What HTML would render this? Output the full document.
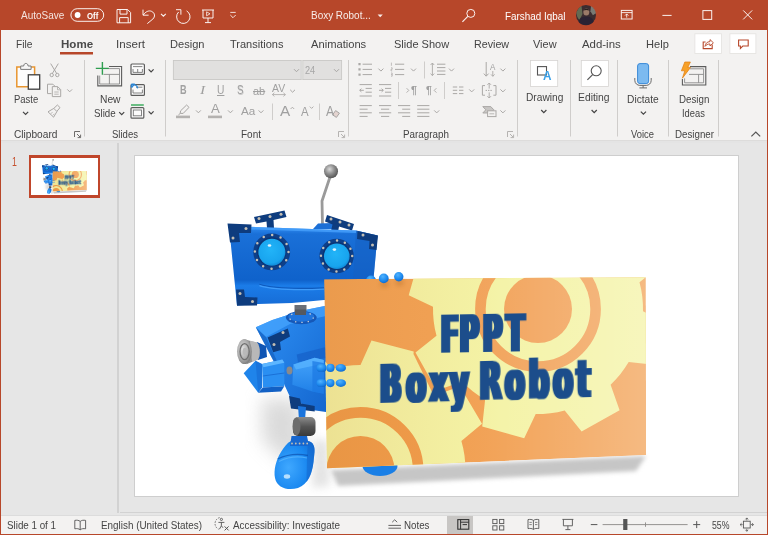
<!DOCTYPE html>
<html lang="en"><head><meta charset="utf-8"><title>Boxy Robot - PowerPoint</title>
<style>
html,body{margin:0;padding:0;}
body{width:768px;height:535px;overflow:hidden;position:relative;background:#e6e6e6;font-family:"Liberation Sans",sans-serif;}
.t{position:absolute;white-space:nowrap;transform-origin:0 50%;line-height:normal;display:inline-block;}
.abs{position:absolute;}
#title{left:0;top:0;width:768px;height:30.2px;background:#b7472a;}
#ribbon{left:0;top:30.2px;width:768px;height:109.8px;background:#f3f2f1;}
#ribline{left:0;top:140px;width:768px;height:1px;background:#dddcdb;}
#wsband{left:0;top:141px;width:768px;height:2px;background:#e4e4e4;}
#status{left:0;top:515px;width:768px;height:20px;background:#f3f2f1;border-top:1px solid #dcdcdc;box-sizing:border-box;}
#bl{left:0;top:0;width:1.2px;height:535px;background:#b7472a;}
#br{left:766.8px;top:0;width:1.2px;height:535px;background:#b7472a;}
#bb{left:0;top:534px;width:768px;height:1px;background:#b7472a;}
#slide{left:134.8px;top:156px;width:603.3px;height:339.6px;background:#fff;box-shadow:0 0 0 .9px #cbcbcb;}
#thumb{left:28.8px;top:154.8px;width:71.5px;height:43px;background:#c0462b;}
#thumbin{left:31.4px;top:157.5px;width:66.3px;height:37.5px;background:#fff;}
#vdiv{left:117.3px;top:143px;width:1.6px;height:370px;background:#d2d2d2;}
#hdiv{left:120px;top:512.2px;width:648px;height:1px;background:#d2d2d2;}
#selview{left:446.5px;top:515.5px;width:26.5px;height:19.5px;background:#c8c6c4;}
svg{position:absolute;left:0;top:0;overflow:visible;}

</style></head>
<body>
<div class="abs" id="title"></div>
<div class="abs" id="ribbon"></div>
<div class="abs" id="ribline"></div>
<div class="abs" id="wsband"></div>
<div class="abs" id="vdiv"></div>
<div class="abs" id="hdiv"></div>
<div class="abs" id="slide"></div>
<div class="abs" id="thumb"></div>
<div class="abs" id="thumbin"></div>
<div class="abs" id="status"></div>
<div class="abs" id="selview"></div>
<svg id="art" width="768" height="535" viewBox="0 0 768 535">
<defs>
<clipPath id="aslideclip"><rect x="134.8" y="156" width="603.3" height="339.6"/></clipPath>
<clipPath id="asignclip"><path d="M324.1 279.3L645.8 277.2L646.1 455.1L327 468.2Z"/></clipPath>
<filter id="abl4" x="-30%" y="-30%" width="160%" height="160%"><feGaussianBlur stdDeviation="4"/></filter>
<filter id="abl8" x="-40%" y="-40%" width="180%" height="180%"><feGaussianBlur stdDeviation="9"/></filter>
<filter id="adil" x="-5%" y="-10%" width="110%" height="120%"><feMorphology operator="dilate" radius="2 0"/></filter>
<filter id="abl2" x="-30%" y="-30%" width="160%" height="160%"><feGaussianBlur stdDeviation="2"/></filter>
<linearGradient id="agHead" x1="0" y1="0" x2="0" y2="1"><stop offset="0" stop-color="#3390f4"/><stop offset=".1" stop-color="#1a70d8"/><stop offset=".68" stop-color="#0f62cb"/><stop offset=".75" stop-color="#1b7ce8"/><stop offset="1" stop-color="#166cd6"/></linearGradient>
<linearGradient id="agBody" x1="0" y1="0" x2="1" y2="1"><stop offset="0" stop-color="#2f92f6"/><stop offset="1" stop-color="#1466cf"/></linearGradient>
<linearGradient id="agArm" x1="0" y1="0" x2="0" y2="1"><stop offset="0" stop-color="#45a4fb"/><stop offset="1" stop-color="#1f7fe6"/></linearGradient>
<radialGradient id="agLens" cx=".45" cy=".4" r=".62"><stop offset="0" stop-color="#22b4f8"/><stop offset=".8" stop-color="#18a4ee"/><stop offset="1" stop-color="#0f86d6"/></radialGradient>
<radialGradient id="agBall" cx=".4" cy=".35" r=".7"><stop offset="0" stop-color="#d9d9d9"/><stop offset=".5" stop-color="#8d8d8d"/><stop offset="1" stop-color="#4e4e4e"/></radialGradient>
<radialGradient id="agFing" cx=".4" cy=".3" r=".8"><stop offset="0" stop-color="#4fb3ff"/><stop offset=".6" stop-color="#1a86ec"/><stop offset="1" stop-color="#0f5fc0"/></radialGradient>
<linearGradient id="agKnee" x1="0" y1="0" x2="0" y2="1"><stop offset="0" stop-color="#8b8b8b"/><stop offset=".5" stop-color="#555"/><stop offset="1" stop-color="#3a3a3a"/></linearGradient>
<radialGradient id="agShoe" cx=".35" cy=".55" r=".8"><stop offset="0" stop-color="#3fa8ff"/><stop offset=".6" stop-color="#1a88f0"/><stop offset="1" stop-color="#1268cf"/></radialGradient>
<linearGradient id="agSignShade" x1="0" y1="0" x2="1" y2="0"><stop offset="0" stop-color="#b86a10" stop-opacity=".13"/><stop offset=".45" stop-color="#d08020" stop-opacity=".02"/><stop offset=".55" stop-color="#fff" stop-opacity=".03"/><stop offset="1" stop-color="#fff" stop-opacity=".26"/></linearGradient>
<radialGradient id="agShoulder" cx=".4" cy=".4" r=".7"><stop offset="0" stop-color="#e2e2e2"/><stop offset=".6" stop-color="#a9a9a9"/><stop offset="1" stop-color="#6e6e6e"/></radialGradient>
</defs>
<g clip-path="url(#aslideclip)">
<!-- shadows -->
<path d="M262 398L300 400L304 450L286 462L262 440Z" fill="#bdbdbd" opacity=".55" filter="url(#abl8)"/>
<path d="M331 470L646 456L636 471L338 486Z" fill="#c6c6c6" filter="url(#abl2)"/>
<path d="M314 440L328 440L330 486L312 488Z" fill="#c4c4c4" opacity=".45" filter="url(#abl4)"/>
<!-- back foot -->
<ellipse cx="380" cy="466" rx="17.500" ry="10" fill="#1a7fe6"/>
<!-- antenna -->
<path d="M330 177L322 201L322.500 226" stroke="#9a9a9a" stroke-width="2.800" fill="none" stroke-linecap="round" stroke-linejoin="round"/>
<circle cx="331" cy="171.300" r="7" fill="url(#agBall)"/>
<!-- antenna base -->
<path d="M313 229L318 223.500L333 223L338 229Z" fill="#1b6fd6"/>
<!-- eyebrows -->
<path d="M254 217L284.500 210.500L286.500 217L273.500 220L274 228L267 228L266.500 221.500L256 223.500Z" fill="#0e3c7e"/>
<path d="M327 215L354 224L352 230.500L339 226.500L338 232L331 231L332.500 224.500L325 221.500Z" fill="#0e3c7e"/>
<g fill="#c4beb2"><circle cx="259" cy="218.600" r="1.500"/><circle cx="270" cy="216.400" r="1.500"/><circle cx="281" cy="214.200" r="1.500"/><circle cx="331" cy="219" r="1.500"/><circle cx="340" cy="222" r="1.500"/><circle cx="349" cy="225" r="1.500"/></g>
<!-- body -->
<path d="M255.800 327.300L272.300 320L300 311L326 305.800L326 412L312 410L290 397L273 360Z" fill="url(#agBody)"/>
<path d="M255.800 327.300L272.300 320L300 311L326 305.800L326 316L290 324L266 337Z" fill="#48a6ff" opacity=".7"/>
<path d="M255.800 327.300L266 337L282 372L273 360Z" fill="#1159b8" opacity=".6"/>
<path d="M296.700 354.400L326 347L326 358L298 362Z" fill="#1560c8" opacity=".7"/>
<path d="M267.600 337.600L287.800 328.600L290 336.500L280 342L281 350L273.200 352.200Z" fill="#0e3c7e"/>
<path d="M289 396L300 398.500L301 403.500L314.700 406L314.700 411.500L291 408.500Z" fill="#0e3c7e"/>
<!-- neck -->
<rect x="294.500" y="305" width="12" height="8" fill="#6a6f78"/>
<ellipse cx="301.300" cy="317.600" rx="15.400" ry="6.600" fill="#1558b8"/>
<ellipse cx="301.300" cy="316.800" rx="13" ry="5" fill="#1f74dc"/>
<ellipse cx="301.300" cy="317.400" rx="12" ry="5" fill="none" stroke="#c4cad4" stroke-width="1.300" stroke-dasharray="1.400 4.800"/>
<rect x="295" y="309.500" width="11" height="5.500" fill="#55595f"/>
<!-- leg -->
<path d="M298 406L306 407L305 420L299 420Z" fill="#1a74dd"/>
<rect x="293" y="417" width="22.500" height="19" rx="5" fill="url(#agKnee)"/>
<ellipse cx="296.500" cy="426.500" rx="4" ry="9" fill="#6c6c6c"/>
<!-- shoe -->
<path d="M291 441L308 441C313 442 315 446 314.500 452L313.500 462C312 474 308 484 298 488C288 491 277 488 275 478C273.500 470 276 460 281 452C284 447 287 443 291 441Z" fill="url(#agShoe)"/>
<path d="M308 441C313 442 315 446 314.500 452L313.500 462C312.500 470 310.500 477 306.500 482L307 456Z" fill="#1466cc" opacity=".55"/>
<path d="M277.700 459C286 455 298 453.500 308 455.500" stroke="#0d55b4" stroke-width="1.300" fill="none" opacity=".75"/>
<path d="M279 461.500C287 457.500 298 456 307 458" stroke="#5cb8ff" stroke-width="1.200" fill="none" opacity=".7"/>
<ellipse cx="287" cy="476.500" rx="3.200" ry="2.200" fill="#d8f0ff" opacity=".8"/>
<path d="M291.500 436L307 436L309 446L290 446Z" fill="#1767cf"/>
<path d="M292 443.500L307.500 443.500" stroke="#c4beb2" stroke-width="1.800" stroke-linecap="round" stroke-dasharray="0 3.800"/>
<!-- head -->
<path d="M229 226L356 230.500L377.500 235.500L371.500 300L324 300L292 303L258 304L237 305.500Z" fill="url(#agHead)"/>
<path d="M356 230.500L377.500 235.500L371.500 300L352 301Z" fill="#1560c2" opacity=".55"/>
<path d="M229 226L356 230.500L356 233L230 228.800Z" fill="#4ba5ff" opacity=".7"/>
<path d="M227.500 223.500L251.500 224.500L251 233L239 233L240 242L230 242.500Z" fill="#0e3c7e"/>
<path d="M357.500 231L378 235.500L376.500 250L369 249L369.500 241L357 239Z" fill="#0e3c7e"/>
<path d="M236 289.500L244 289.500L245 297L257.500 297.500L257 305.500L237 305.800Z" fill="#0e3c7e"/>
<g fill="#c4beb2"><circle cx="233" cy="238" r="1.500"/><circle cx="246" cy="228.500" r="1.500"/><circle cx="363" cy="235" r="1.500"/><circle cx="372.500" cy="245" r="1.500"/><circle cx="240" cy="293.500" r="1.500"/><circle cx="252.500" cy="301.500" r="1.500"/><circle cx="274" cy="344.500" r="1.500"/><circle cx="283" cy="332.500" r="1.500"/></g>
<!-- mouth -->
<path d="M259.400 284.300C270 287.600 290 289.200 324 287.800" stroke="#0d56b8" stroke-width="1.200" fill="none" opacity=".9"/><path d="M259.400 285.600C270 288.900 290 290.500 324 289.100" stroke="#49a4ff" stroke-width="1.200" fill="none" opacity=".8"/>
<!-- eyes -->
<circle cx="271.7" cy="251.9" r="18.4" fill="#0e3f88"/><circle cx="271.7" cy="251.9" r="16.80" fill="none" stroke="#c9c2b4" stroke-width="2.500" stroke-linecap="round" stroke-dasharray="0 8.796"/><circle cx="271.7" cy="251.9" r="14.7" fill="#0b3474"/><circle cx="271.9" cy="252.20000000000002" r="13.5" fill="url(#agLens)"/><ellipse cx="269.5" cy="245.5" rx="1.800" ry="1.300" fill="#fff" opacity=".85"/>
<circle cx="336.6" cy="256" r="17.2" fill="#0e3f88"/><circle cx="336.6" cy="256" r="15.60" fill="none" stroke="#c9c2b4" stroke-width="2.500" stroke-linecap="round" stroke-dasharray="0 8.168"/><circle cx="336.6" cy="256" r="14.0" fill="#0b3474"/><circle cx="336.8" cy="256.3" r="12.8" fill="url(#agLens)"/><ellipse cx="334.40000000000003" cy="249.6" rx="1.800" ry="1.300" fill="#fff" opacity=".85"/>
<!-- shoulder -->
<path d="M257 342L266 346L267 357L258 360Z" fill="#0f55b4"/>
<path d="M243.500 339.300L257 342.500C260.500 346 260.500 356 258 359.500L246.500 364.300Z" fill="#8f8f8f"/>
<path d="M250 340.800L257 342.500C260.500 346 260.500 356 258 359.500L252 362Z" fill="#c9c9c9" opacity=".7"/>
<ellipse cx="244.400" cy="351.600" rx="7.400" ry="12.500" fill="url(#agShoulder)"/>
<ellipse cx="244.600" cy="351.600" rx="4.600" ry="8" fill="none" stroke="#6f6f6f" stroke-width="1.300"/>
<ellipse cx="244.800" cy="351.600" rx="2.200" ry="3.800" fill="#b9b9b9"/>
<!-- arm -->
<path d="M243.700 373.200L255.500 360.800L262 364L262 387.600L258.200 392.800Z" fill="#1f84ea"/>
<path d="M255.500 360.800L262 364L262 387.600L258.200 392.800Z" fill="#1468cf" opacity=".55"/>
<path d="M262 364L282.400 359.500L284.300 362.700L284.300 386.300L262.800 387.600Z" fill="#2a8ff2"/>
<path d="M262 364L282.400 359.500L284.300 362.700L263.400 367.300Z" fill="#5db6ff"/>
<path d="M262.800 376L284.300 373" stroke="#1668cf" stroke-width=".8"/>
<path d="M258.200 392.800L262.800 387.600L284.300 386.300L281 391.500Z" fill="#1260c4"/>
<ellipse cx="289.500" cy="370.500" rx="3" ry="4" fill="#8a8a8a"/>
<path d="M293.400 364.500L314.700 357.800L323.700 360L323.700 393.700L312.400 391.400L292.300 384.700Z" fill="url(#agArm)"/>
<path d="M293.400 364.500L314.700 357.800L323.700 360L323.700 363.500L296 369.500Z" fill="#5ab4ff" opacity=".75"/>
<path d="M312.400 361L323.700 363L323.700 393.700L312.400 391.400Z" fill="#1b78e2" opacity=".7"/>
<circle cx="371" cy="280.600" r="5" fill="url(#agFing)"/>
<!-- sign -->
<g clip-path="url(#asignclip)">
<path d="M324.1 279.3L645.8 277.2L646.1 455.1L327 468.2Z" fill="#f2a256"/>
<path d="M360.5 365.0 L371.5 340.5 L413.7 351.4 L411.4 378.2 L417.7 381.9 L423.7 386.1 L429.4 390.8 L434.7 395.8 L459.9 386.2 L482.0 423.7 L461.4 441.1 L463.2 448.2 L464.5 455.4 L465.2 462.7 L465.5 470.0 L490.0 481.0 L479.1 523.2 L452.3 520.9 L448.6 527.2 L444.4 533.2 L439.7 538.9 L434.7 544.2 L444.3 569.4 L406.8 591.5 L389.4 570.9 L382.3 572.7 L375.1 574.0 L367.8 574.7 L360.5 575.0 L349.5 599.5 L307.3 588.6 L309.6 561.8 L303.3 558.1 L297.3 553.9 L291.6 549.2 L286.3 544.2 L261.1 553.8 L239.0 516.3 L259.6 498.9 L257.8 491.8 L256.5 484.6 L255.8 477.3 L255.5 470.0 L231.0 459.0 L241.9 416.8 L268.7 419.1 L272.4 412.8 L276.6 406.8 L281.3 401.1 L286.3 395.8 L276.7 370.6 L314.2 348.5 L331.6 369.1 L338.7 367.3 L345.9 366.0 L353.2 365.3Z" fill="#f4f3a6"/>
<path d="M643.0 311.3 L667.3 322.8 L655.4 364.8 L628.7 361.9 L624.8 368.1 L620.5 374.0 L615.7 379.6 L610.6 384.8 L619.6 410.2 L581.6 431.5 L564.7 410.5 L557.6 412.2 L550.3 413.3 L543.0 413.9 L535.7 414.0 L524.2 438.3 L482.2 426.4 L485.1 399.7 L478.9 395.8 L473.0 391.5 L467.4 386.7 L462.2 381.6 L436.8 390.6 L415.5 352.6 L436.5 335.7 L434.8 328.6 L433.7 321.3 L433.1 314.0 L433.0 306.7 L408.7 295.2 L420.6 253.2 L447.3 256.1 L451.2 249.9 L455.5 244.0 L460.3 238.4 L465.4 233.2 L456.4 207.8 L494.4 186.5 L511.3 207.5 L518.4 205.8 L525.7 204.7 L533.0 204.1 L540.3 204.0 L551.8 179.7 L593.8 191.6 L590.9 218.3 L597.1 222.2 L603.0 226.5 L608.6 231.3 L613.8 236.4 L639.2 227.4 L660.5 265.4 L639.5 282.3 L641.2 289.4 L642.3 296.7 L642.9 304.0Z" fill="#f4f3a6"/>
<path d="M412 353L409.500 381L434 399L432 392L414 355Z" fill="#f4f3a6"/>
<circle cx="538" cy="309" r="57.600" fill="none" stroke="#f2a45c" stroke-width="10.600"/>
<circle cx="538" cy="309" r="34" fill="#f2a45c"/>
<circle cx="360.500" cy="470" r="57.600" fill="none" stroke="#f09c4c" stroke-width="10.600"/>
<circle cx="360.500" cy="470" r="34" fill="#f09c4c"/>
<path d="M324.1 279.3L645.8 277.2L646.1 455.1L327 468.2Z" fill="url(#agSignShade)"/>
</g>
<g font-family="'DejaVu Sans', 'Liberation Sans', sans-serif" font-weight="700" fill="#1b4e8b" ><g transform="matrix(1 -0.017 0 1 0 8.211)"><g filter="url(#adil)"><text transform="scale(0.53 1)" x="831.70 866.98 910.75 954.91" y="352.2" font-size="50.8" xml:space="preserve">FPPT</text></g></g><g transform="matrix(1 -0.028 0 1 0 13.580)"><g filter="url(#adil)"><text transform="scale(0.546 1)" x="695.26 743.66 786.32 823.90 860.81 877.67 924.62 967.86 1012.71 1055.90" y="400.3" font-size="53.5" xml:space="preserve">Boxy Robot</text></g></g></g>
<!-- fingers on sign -->
<g fill="#b9742e" opacity=".45" filter="url(#abl2)"><ellipse cx="384.500" cy="284" rx="4.500" ry="3.500"/><ellipse cx="399.500" cy="282.500" rx="4.500" ry="3.500"/></g>
<g fill="url(#agFing)">
<circle cx="383.750" cy="278.400" r="4.900"/><circle cx="398.750" cy="276.800" r="4.700"/>
<rect x="316.500" y="364" width="10" height="7.800" rx="3.900"/><circle cx="330.400" cy="367.900" r="4.100"/><ellipse cx="340.800" cy="367.900" rx="5.200" ry="3.900"/>
<rect x="316.500" y="379.200" width="10" height="7.800" rx="3.900"/><circle cx="330.400" cy="383.100" r="4.100"/><ellipse cx="340.800" cy="383.100" rx="5.200" ry="3.900"/>
</g>
</g>
</g>
</svg>
<svg id="{P}thumbart" style="left:31.9px;top:158.2px" width="64.8" height="36.5" viewBox="134.5 155 604 341" preserveAspectRatio="none">
<defs>
<clipPath id="bslideclip"><rect x="134.8" y="156" width="603.3" height="339.6"/></clipPath>
<clipPath id="bsignclip"><path d="M324.1 279.3L645.8 277.2L646.1 455.1L327 468.2Z"/></clipPath>
<filter id="bbl4" x="-30%" y="-30%" width="160%" height="160%"><feGaussianBlur stdDeviation="4"/></filter>
<filter id="bbl8" x="-40%" y="-40%" width="180%" height="180%"><feGaussianBlur stdDeviation="9"/></filter>
<filter id="bdil" x="-5%" y="-10%" width="110%" height="120%"><feMorphology operator="dilate" radius="2 0"/></filter>
<filter id="bbl2" x="-30%" y="-30%" width="160%" height="160%"><feGaussianBlur stdDeviation="2"/></filter>
<linearGradient id="bgHead" x1="0" y1="0" x2="0" y2="1"><stop offset="0" stop-color="#3390f4"/><stop offset=".1" stop-color="#1a70d8"/><stop offset=".68" stop-color="#0f62cb"/><stop offset=".75" stop-color="#1b7ce8"/><stop offset="1" stop-color="#166cd6"/></linearGradient>
<linearGradient id="bgBody" x1="0" y1="0" x2="1" y2="1"><stop offset="0" stop-color="#2f92f6"/><stop offset="1" stop-color="#1466cf"/></linearGradient>
<linearGradient id="bgArm" x1="0" y1="0" x2="0" y2="1"><stop offset="0" stop-color="#45a4fb"/><stop offset="1" stop-color="#1f7fe6"/></linearGradient>
<radialGradient id="bgLens" cx=".45" cy=".4" r=".62"><stop offset="0" stop-color="#22b4f8"/><stop offset=".8" stop-color="#18a4ee"/><stop offset="1" stop-color="#0f86d6"/></radialGradient>
<radialGradient id="bgBall" cx=".4" cy=".35" r=".7"><stop offset="0" stop-color="#d9d9d9"/><stop offset=".5" stop-color="#8d8d8d"/><stop offset="1" stop-color="#4e4e4e"/></radialGradient>
<radialGradient id="bgFing" cx=".4" cy=".3" r=".8"><stop offset="0" stop-color="#4fb3ff"/><stop offset=".6" stop-color="#1a86ec"/><stop offset="1" stop-color="#0f5fc0"/></radialGradient>
<linearGradient id="bgKnee" x1="0" y1="0" x2="0" y2="1"><stop offset="0" stop-color="#8b8b8b"/><stop offset=".5" stop-color="#555"/><stop offset="1" stop-color="#3a3a3a"/></linearGradient>
<radialGradient id="bgShoe" cx=".35" cy=".55" r=".8"><stop offset="0" stop-color="#3fa8ff"/><stop offset=".6" stop-color="#1a88f0"/><stop offset="1" stop-color="#1268cf"/></radialGradient>
<linearGradient id="bgSignShade" x1="0" y1="0" x2="1" y2="0"><stop offset="0" stop-color="#b86a10" stop-opacity=".13"/><stop offset=".45" stop-color="#d08020" stop-opacity=".02"/><stop offset=".55" stop-color="#fff" stop-opacity=".03"/><stop offset="1" stop-color="#fff" stop-opacity=".26"/></linearGradient>
<radialGradient id="bgShoulder" cx=".4" cy=".4" r=".7"><stop offset="0" stop-color="#e2e2e2"/><stop offset=".6" stop-color="#a9a9a9"/><stop offset="1" stop-color="#6e6e6e"/></radialGradient>
</defs>
<g clip-path="url(#bslideclip)">
<!-- shadows -->
<path d="M262 398L300 400L304 450L286 462L262 440Z" fill="#bdbdbd" opacity=".55" filter="url(#bbl8)"/>
<path d="M331 470L646 456L636 471L338 486Z" fill="#c6c6c6" filter="url(#bbl2)"/>
<path d="M314 440L328 440L330 486L312 488Z" fill="#c4c4c4" opacity=".45" filter="url(#bbl4)"/>
<!-- back foot -->
<ellipse cx="380" cy="466" rx="17.500" ry="10" fill="#1a7fe6"/>
<!-- antenna -->
<path d="M330 177L322 201L322.500 226" stroke="#9a9a9a" stroke-width="2.800" fill="none" stroke-linecap="round" stroke-linejoin="round"/>
<circle cx="331" cy="171.300" r="7" fill="url(#bgBall)"/>
<!-- antenna base -->
<path d="M313 229L318 223.500L333 223L338 229Z" fill="#1b6fd6"/>
<!-- eyebrows -->
<path d="M254 217L284.500 210.500L286.500 217L273.500 220L274 228L267 228L266.500 221.500L256 223.500Z" fill="#0e3c7e"/>
<path d="M327 215L354 224L352 230.500L339 226.500L338 232L331 231L332.500 224.500L325 221.500Z" fill="#0e3c7e"/>
<g fill="#c4beb2"><circle cx="259" cy="218.600" r="1.500"/><circle cx="270" cy="216.400" r="1.500"/><circle cx="281" cy="214.200" r="1.500"/><circle cx="331" cy="219" r="1.500"/><circle cx="340" cy="222" r="1.500"/><circle cx="349" cy="225" r="1.500"/></g>
<!-- body -->
<path d="M255.800 327.300L272.300 320L300 311L326 305.800L326 412L312 410L290 397L273 360Z" fill="url(#bgBody)"/>
<path d="M255.800 327.300L272.300 320L300 311L326 305.800L326 316L290 324L266 337Z" fill="#48a6ff" opacity=".7"/>
<path d="M255.800 327.300L266 337L282 372L273 360Z" fill="#1159b8" opacity=".6"/>
<path d="M296.700 354.400L326 347L326 358L298 362Z" fill="#1560c8" opacity=".7"/>
<path d="M267.600 337.600L287.800 328.600L290 336.500L280 342L281 350L273.200 352.200Z" fill="#0e3c7e"/>
<path d="M289 396L300 398.500L301 403.500L314.700 406L314.700 411.500L291 408.500Z" fill="#0e3c7e"/>
<!-- neck -->
<rect x="294.500" y="305" width="12" height="8" fill="#6a6f78"/>
<ellipse cx="301.300" cy="317.600" rx="15.400" ry="6.600" fill="#1558b8"/>
<ellipse cx="301.300" cy="316.800" rx="13" ry="5" fill="#1f74dc"/>
<ellipse cx="301.300" cy="317.400" rx="12" ry="5" fill="none" stroke="#c4cad4" stroke-width="1.300" stroke-dasharray="1.400 4.800"/>
<rect x="295" y="309.500" width="11" height="5.500" fill="#55595f"/>
<!-- leg -->
<path d="M298 406L306 407L305 420L299 420Z" fill="#1a74dd"/>
<rect x="293" y="417" width="22.500" height="19" rx="5" fill="url(#bgKnee)"/>
<ellipse cx="296.500" cy="426.500" rx="4" ry="9" fill="#6c6c6c"/>
<!-- shoe -->
<path d="M291 441L308 441C313 442 315 446 314.500 452L313.500 462C312 474 308 484 298 488C288 491 277 488 275 478C273.500 470 276 460 281 452C284 447 287 443 291 441Z" fill="url(#bgShoe)"/>
<path d="M308 441C313 442 315 446 314.500 452L313.500 462C312.500 470 310.500 477 306.500 482L307 456Z" fill="#1466cc" opacity=".55"/>
<path d="M277.700 459C286 455 298 453.500 308 455.500" stroke="#0d55b4" stroke-width="1.300" fill="none" opacity=".75"/>
<path d="M279 461.500C287 457.500 298 456 307 458" stroke="#5cb8ff" stroke-width="1.200" fill="none" opacity=".7"/>
<ellipse cx="287" cy="476.500" rx="3.200" ry="2.200" fill="#d8f0ff" opacity=".8"/>
<path d="M291.500 436L307 436L309 446L290 446Z" fill="#1767cf"/>
<path d="M292 443.500L307.500 443.500" stroke="#c4beb2" stroke-width="1.800" stroke-linecap="round" stroke-dasharray="0 3.800"/>
<!-- head -->
<path d="M229 226L356 230.500L377.500 235.500L371.500 300L324 300L292 303L258 304L237 305.500Z" fill="url(#bgHead)"/>
<path d="M356 230.500L377.500 235.500L371.500 300L352 301Z" fill="#1560c2" opacity=".55"/>
<path d="M229 226L356 230.500L356 233L230 228.800Z" fill="#4ba5ff" opacity=".7"/>
<path d="M227.500 223.500L251.500 224.500L251 233L239 233L240 242L230 242.500Z" fill="#0e3c7e"/>
<path d="M357.500 231L378 235.500L376.500 250L369 249L369.500 241L357 239Z" fill="#0e3c7e"/>
<path d="M236 289.500L244 289.500L245 297L257.500 297.500L257 305.500L237 305.800Z" fill="#0e3c7e"/>
<g fill="#c4beb2"><circle cx="233" cy="238" r="1.500"/><circle cx="246" cy="228.500" r="1.500"/><circle cx="363" cy="235" r="1.500"/><circle cx="372.500" cy="245" r="1.500"/><circle cx="240" cy="293.500" r="1.500"/><circle cx="252.500" cy="301.500" r="1.500"/><circle cx="274" cy="344.500" r="1.500"/><circle cx="283" cy="332.500" r="1.500"/></g>
<!-- mouth -->
<path d="M259.400 284.300C270 287.600 290 289.200 324 287.800" stroke="#0d56b8" stroke-width="1.200" fill="none" opacity=".9"/><path d="M259.400 285.600C270 288.900 290 290.500 324 289.100" stroke="#49a4ff" stroke-width="1.200" fill="none" opacity=".8"/>
<!-- eyes -->
<circle cx="271.7" cy="251.9" r="18.4" fill="#0e3f88"/><circle cx="271.7" cy="251.9" r="16.80" fill="none" stroke="#c9c2b4" stroke-width="2.500" stroke-linecap="round" stroke-dasharray="0 8.796"/><circle cx="271.7" cy="251.9" r="14.7" fill="#0b3474"/><circle cx="271.9" cy="252.20000000000002" r="13.5" fill="url(#bgLens)"/><ellipse cx="269.5" cy="245.5" rx="1.800" ry="1.300" fill="#fff" opacity=".85"/>
<circle cx="336.6" cy="256" r="17.2" fill="#0e3f88"/><circle cx="336.6" cy="256" r="15.60" fill="none" stroke="#c9c2b4" stroke-width="2.500" stroke-linecap="round" stroke-dasharray="0 8.168"/><circle cx="336.6" cy="256" r="14.0" fill="#0b3474"/><circle cx="336.8" cy="256.3" r="12.8" fill="url(#bgLens)"/><ellipse cx="334.40000000000003" cy="249.6" rx="1.800" ry="1.300" fill="#fff" opacity=".85"/>
<!-- shoulder -->
<path d="M257 342L266 346L267 357L258 360Z" fill="#0f55b4"/>
<path d="M243.500 339.300L257 342.500C260.500 346 260.500 356 258 359.500L246.500 364.300Z" fill="#8f8f8f"/>
<path d="M250 340.800L257 342.500C260.500 346 260.500 356 258 359.500L252 362Z" fill="#c9c9c9" opacity=".7"/>
<ellipse cx="244.400" cy="351.600" rx="7.400" ry="12.500" fill="url(#bgShoulder)"/>
<ellipse cx="244.600" cy="351.600" rx="4.600" ry="8" fill="none" stroke="#6f6f6f" stroke-width="1.300"/>
<ellipse cx="244.800" cy="351.600" rx="2.200" ry="3.800" fill="#b9b9b9"/>
<!-- arm -->
<path d="M243.700 373.200L255.500 360.800L262 364L262 387.600L258.200 392.800Z" fill="#1f84ea"/>
<path d="M255.500 360.800L262 364L262 387.600L258.200 392.800Z" fill="#1468cf" opacity=".55"/>
<path d="M262 364L282.400 359.500L284.300 362.700L284.300 386.300L262.800 387.600Z" fill="#2a8ff2"/>
<path d="M262 364L282.400 359.500L284.300 362.700L263.400 367.300Z" fill="#5db6ff"/>
<path d="M262.800 376L284.300 373" stroke="#1668cf" stroke-width=".8"/>
<path d="M258.200 392.800L262.800 387.600L284.300 386.300L281 391.500Z" fill="#1260c4"/>
<ellipse cx="289.500" cy="370.500" rx="3" ry="4" fill="#8a8a8a"/>
<path d="M293.400 364.500L314.700 357.800L323.700 360L323.700 393.700L312.400 391.400L292.300 384.700Z" fill="url(#bgArm)"/>
<path d="M293.400 364.500L314.700 357.800L323.700 360L323.700 363.500L296 369.500Z" fill="#5ab4ff" opacity=".75"/>
<path d="M312.400 361L323.700 363L323.700 393.700L312.400 391.400Z" fill="#1b78e2" opacity=".7"/>
<circle cx="371" cy="280.600" r="5" fill="url(#bgFing)"/>
<!-- sign -->
<g clip-path="url(#bsignclip)">
<path d="M324.1 279.3L645.8 277.2L646.1 455.1L327 468.2Z" fill="#f2a256"/>
<path d="M360.5 365.0 L371.5 340.5 L413.7 351.4 L411.4 378.2 L417.7 381.9 L423.7 386.1 L429.4 390.8 L434.7 395.8 L459.9 386.2 L482.0 423.7 L461.4 441.1 L463.2 448.2 L464.5 455.4 L465.2 462.7 L465.5 470.0 L490.0 481.0 L479.1 523.2 L452.3 520.9 L448.6 527.2 L444.4 533.2 L439.7 538.9 L434.7 544.2 L444.3 569.4 L406.8 591.5 L389.4 570.9 L382.3 572.7 L375.1 574.0 L367.8 574.7 L360.5 575.0 L349.5 599.5 L307.3 588.6 L309.6 561.8 L303.3 558.1 L297.3 553.9 L291.6 549.2 L286.3 544.2 L261.1 553.8 L239.0 516.3 L259.6 498.9 L257.8 491.8 L256.5 484.6 L255.8 477.3 L255.5 470.0 L231.0 459.0 L241.9 416.8 L268.7 419.1 L272.4 412.8 L276.6 406.8 L281.3 401.1 L286.3 395.8 L276.7 370.6 L314.2 348.5 L331.6 369.1 L338.7 367.3 L345.9 366.0 L353.2 365.3Z" fill="#f4f3a6"/>
<path d="M643.0 311.3 L667.3 322.8 L655.4 364.8 L628.7 361.9 L624.8 368.1 L620.5 374.0 L615.7 379.6 L610.6 384.8 L619.6 410.2 L581.6 431.5 L564.7 410.5 L557.6 412.2 L550.3 413.3 L543.0 413.9 L535.7 414.0 L524.2 438.3 L482.2 426.4 L485.1 399.7 L478.9 395.8 L473.0 391.5 L467.4 386.7 L462.2 381.6 L436.8 390.6 L415.5 352.6 L436.5 335.7 L434.8 328.6 L433.7 321.3 L433.1 314.0 L433.0 306.7 L408.7 295.2 L420.6 253.2 L447.3 256.1 L451.2 249.9 L455.5 244.0 L460.3 238.4 L465.4 233.2 L456.4 207.8 L494.4 186.5 L511.3 207.5 L518.4 205.8 L525.7 204.7 L533.0 204.1 L540.3 204.0 L551.8 179.7 L593.8 191.6 L590.9 218.3 L597.1 222.2 L603.0 226.5 L608.6 231.3 L613.8 236.4 L639.2 227.4 L660.5 265.4 L639.5 282.3 L641.2 289.4 L642.3 296.7 L642.9 304.0Z" fill="#f4f3a6"/>
<path d="M412 353L409.500 381L434 399L432 392L414 355Z" fill="#f4f3a6"/>
<circle cx="538" cy="309" r="57.600" fill="none" stroke="#f2a45c" stroke-width="10.600"/>
<circle cx="538" cy="309" r="34" fill="#f2a45c"/>
<circle cx="360.500" cy="470" r="57.600" fill="none" stroke="#f09c4c" stroke-width="10.600"/>
<circle cx="360.500" cy="470" r="34" fill="#f09c4c"/>
<path d="M324.1 279.3L645.8 277.2L646.1 455.1L327 468.2Z" fill="url(#bgSignShade)"/>
</g>
<g font-family="'DejaVu Sans', 'Liberation Sans', sans-serif" font-weight="700" fill="#1b4e8b" stroke="#1b4e8b" stroke-width="5"><g transform="matrix(1 -0.017 0 1 0 8.211)"><g filter="url(#bdil)"><text transform="scale(0.53 1)" x="831.70 866.98 910.75 954.91" y="352.2" font-size="50.8" xml:space="preserve">FPPT</text></g></g><g transform="matrix(1 -0.028 0 1 0 13.580)"><g filter="url(#bdil)"><text transform="scale(0.546 1)" x="695.26 743.66 786.32 823.90 860.81 877.67 924.62 967.86 1012.71 1055.90" y="400.3" font-size="53.5" xml:space="preserve">Boxy Robot</text></g></g></g>
<!-- fingers on sign -->
<g fill="#b9742e" opacity=".45" filter="url(#bbl2)"><ellipse cx="384.500" cy="284" rx="4.500" ry="3.500"/><ellipse cx="399.500" cy="282.500" rx="4.500" ry="3.500"/></g>
<g fill="url(#bgFing)">
<circle cx="383.750" cy="278.400" r="4.900"/><circle cx="398.750" cy="276.800" r="4.700"/>
<rect x="316.500" y="364" width="10" height="7.800" rx="3.900"/><circle cx="330.400" cy="367.900" r="4.100"/><ellipse cx="340.800" cy="367.900" rx="5.200" ry="3.900"/>
<rect x="316.500" y="379.200" width="10" height="7.800" rx="3.900"/><circle cx="330.400" cy="383.100" r="4.100"/><ellipse cx="340.800" cy="383.100" rx="5.200" ry="3.900"/>
</g>
</g>
</g>
</svg>
<svg width="768" height="535" viewBox="0 0 768 535" fill="none">
<!-- ===== title bar ===== -->
<g stroke="#fff" stroke-width="1" stroke-opacity=".92">
<rect x="70.9" y="8.7" width="32.8" height="12.6" rx="6.3"/>
<circle cx="77.6" cy="15" r="2.9" fill="#fff" stroke="none"/>
<!-- save -->
<path d="M117 9.5h10.6l3 3v10.3h-13.6z"/><path d="M120 9.5v4.6h7v-4.6"/><path d="M119.6 22.8v-5.2h8.6v5.2"/>
<!-- undo -->
<path d="M143 9.6v5.6h5.6"/><path d="M143.3 15c2.2-3.4 5.6-4.9 8.4-3.6 3.4 1.7 3.6 5.2 1.2 7.6l-5.6 4.6" />
<path d="M161 13.8l2.4 2.4 2.4-2.4" stroke-width="1.1"/>
<!-- redo -->
<path d="M186.600 10.900A6.700 6.700 0 1 1 178.600 12"/><path d="M176 9.700h4.900v5"/>
<!-- present -->
<path d="M202 10h12M203 10v8h10v-8M208 18v4.5M205 22.6h6"/><path d="M206.6 11.8l3.4 2-3.4 2z" stroke-width=".8"/>
<!-- customize -->
<path d="M230.3 12.4h5.4M230.3 15l2.7 2.7 2.7-2.7" stroke-width=".9"/>
<!-- search -->
<circle cx="470.8" cy="13.4" r="4"/><path d="M467.8 16.4l-5.4 5.4" stroke-width="1.2"/>
<!-- ribbon display -->
<rect x="621.3" y="10.4" width="10.8" height="8.6"/><path d="M621.3 12.6h10.8M626.7 17.6v-3.6M625 15.6l1.7-1.7 1.7 1.7" stroke-width=".9"/>
<!-- window ctl -->
<path d="M662.4 15.4h9.2"/><rect x="702.9" y="10.6" width="8.8" height="8.8"/><path d="M743.2 10.4l9 9M752.2 10.4l-9 9"/>
</g>
<path d="M377.6 14.4h5.2l-2.6 2.9z" fill="#fff" fill-opacity=".9"/>
<!-- avatar -->
<g>
<circle cx="586" cy="15" r="10" fill="#3b2c30"/>
<path d="M576.5 12a10 10 0 0 1 5-6l1 8-3 6a10 10 0 0 1-3-8z" fill="#6e7a5c" opacity=".8"/>
<path d="M591 6.3a10 10 0 0 1 4.9 7l-3 2-2.5-4z" fill="#8a8f86" opacity=".8"/>
<ellipse cx="586.3" cy="12" rx="3" ry="3.6" fill="#9a7a68"/>
<path d="M583.3 10.6c.4-2.6 5.6-2.6 6 0-1.6-.9-4.4-.9-6 0z" fill="#2a2020"/>
<path d="M578.6 22c.6-4 3.6-5.6 7.6-5.6s6.8 1.6 7.4 5.4a10 10 0 0 1-15 .2z" fill="#2a2233"/>
</g>
<!-- ===== tab row ===== -->
<rect x="60" y="52" width="33" height="2.5" fill="#b7472a"/>
<rect x="694.9" y="33.8" width="26.6" height="19.6" fill="#fff" stroke="#e3e1df" stroke-width=".8"/>
<rect x="729.9" y="33.8" width="26" height="19.6" fill="#fff" stroke="#e3e1df" stroke-width=".8"/>
<g stroke="#b7472a" stroke-width="1.1">
<path d="M705.6 42h-2.4v6.6h9v-4"/><path d="M705 46.4c.4-3 2-4.6 5-4.8v-2l3.4 3.2-3.4 3.2v-2c-2.4 0-3.8.8-5 2.400z" stroke-width=".9"/>
<path d="M738.6 40h9.600v6h-5.400l-2.400 2.400v-2.400h-1.800z"/>
</g>
<!-- ===== ribbon dividers ===== -->
<g stroke="#cfcdcb" stroke-width="1">
<path d="M84.5 60v76.500M165.500 60v76.500M348.500 60v76.500M517.500 60v76.500M570.500 60v76.500M617.500 60v76.500M668.500 60v76.500M718.500 60v76.500"/>
<path d="M272.500 103.500v16.500M319.500 103.500v16.500M424.500 61.500v17M398.500 82v17M444.500 82v17"/>
</g>
<!-- launchers -->
<g stroke="#6e6c6a" stroke-width="1">
<path d="M74.500 137v-5.500h5.500M77 134l3.400 3.400M80.600 134.600v3h-3"/>
<path d="M74.500 137v-5.500h5.500M77 134l3.400 3.400M80.600 134.600v3h-3" transform="translate(264 0)" stroke="#b5b3b1"/>
<path d="M74.500 137v-5.500h5.500M77 134l3.400 3.400M80.600 134.600v3h-3" transform="translate(433 0)" stroke="#b5b3b1"/>
</g>
<path d="M751.400 136.400l4.400-4.400 4.400 4.400" stroke="#555" stroke-width="1.200"/>
<!-- ===== clipboard group ===== -->
<path d="M16.800 67h17.800v19.800h-17.800z" fill="#fdfdfd" stroke="#e8952f" stroke-width="1.500"/>
<path d="M20.700 69.400v-3.400h3c0-3.400 4.400-3.400 4.400 0h3v3.400z" fill="#f6f6f6" stroke="#7a7a7a" stroke-width="1"/>
<rect x="28.300" y="74.800" width="11.400" height="14.400" fill="#fff" stroke="#3f3f3f" stroke-width="1.300"/>
<path d="M23 111.800l2.600 2.600 2.600-2.600" stroke="#444" stroke-width="1.200"/>
<g stroke="#aaa8a6" stroke-width="1">
<!-- scissors -->
<path d="M50.700 63.600l5.900 9.800M58.300 63.600l-5.900 9.800"/><circle cx="51.700" cy="75" r="1.700"/><circle cx="57.300" cy="75" r="1.700"/>
<!-- copy -->
<path d="M51.500 93.600h-4v-9.400h5.400l2 2"/><path d="M52.300 86.600h5.400l3 3v7h-8.400z"/><path d="M57.500 86.800v3h3M54.300 92h4.400M54.300 94.200h4.400" stroke-width=".8"/>
<path d="M67.300 89.400l2.400 2.400 2.400-2.400"/>
<!-- format painter -->
<path d="M57.400 105l2.600 2.600-3.200 3.800-3-3z"/><path d="M53.800 108.400l-5.800 3.400 5.600 5.400 3.400-5.800"/><path d="M50.600 113.600l2 -1.200M52.800 115.400l1.400-1.600" stroke-width=".7"/>
</g>
<!-- ===== slides group ===== -->
<g stroke="#5c5c5c" stroke-width="1.100">
<path d="M109 66.500h12.600v19.400h-23.800v-10.500"/><path d="M103.500 68.600h16v15.400h-19.800v-8.400" stroke-width=".9" stroke="#8a8a8a"/>
<path d="M103.500 74.400h16M109.400 74.400v9.600" stroke-width=".9" stroke="#8a8a8a"/>
</g>
<path d="M102.400 62v12.800M95.800 68.400h13" stroke="#2f9e50" stroke-width="1.400"/>
<path d="M119.200 112.200l2.500 2.500 2.500-2.500" stroke="#444" stroke-width="1.200"/>
<!-- layout -->
<g stroke="#5c5c5c" stroke-width="1.200">
<rect x="131" y="64" width="13.400" height="10.400" rx="1" fill="#fbfbfb"/><path d="M133 66.600h9.400M133 69v3.400h9.400v-3.400M137.700 69v3.400" stroke-width=".9" stroke="#777"/>
<rect x="131" y="84.600" width="13.400" height="10.800" rx="1" fill="#fbfbfb"/><path d="M136 87.200h6.400M133 89.600v3.400h9.400v-3.400" stroke-width=".9" stroke="#777"/>
<rect x="131" y="107.600" width="12.800" height="10.600" rx="1" fill="#fbfbfb"/><rect x="133.300" y="110" width="8.200" height="5.800" stroke-width=".9" stroke="#777"/>
</g>
<path d="M131 105h12.800" stroke="#5cb878" stroke-width="1.800"/>
<path d="M131.600 87.600l2.800-3.400M131.400 84.200h3.400M131.400 84.200v3.400" stroke="#2a86d8" stroke-width="1.200"/><path d="M132 85c3-1 5.400.4 5.600 3.400" stroke="#2a86d8" stroke-width="1.300"/>
<path d="M148.600 69.400l2.500 2.500 2.500-2.500M148.600 111.400l2.500 2.500 2.500-2.500" stroke="#444" stroke-width="1.200"/>
<!-- ===== font group ===== -->
<rect x="173.400" y="60.500" width="168.200" height="19" fill="#e1e0df" stroke="#c9c8c6" stroke-width=".9"/>
<path d="M302 60.500v19" stroke="#f3f2f1" stroke-width="1.2"/><path d="M301.200 60.500v19M302.800 60.500v19" stroke="#c9c8c6" stroke-width=".7"/>
<g stroke="#a8a6a4" stroke-width="1">
<path d="M294 69.200l2.500 2.500 2.500-2.500M334 69.200l2.500 2.500 2.500-2.500"/>
<path d="M290.200 89.800l2.400 2.400 2.400-2.400M196 110.400l2.400 2.400 2.400-2.400M228 110.400l2.400 2.400 2.400-2.400M258.600 110.400l2.400 2.400 2.400-2.400"/>
<!-- AV arrows -->
<path d="M272.400 94.600h13M274.400 92.800l-2 1.800 2 1.800M283.400 92.800l2 1.800-2 1.800" stroke-width=".8"/>
<!-- highlighter -->
<path d="M186.600 105l2.400 2.400-5.800 6h-3l.4-2.600z"/><path d="M180 113.600l-1.600 1.400"/>
<!-- A^ Av carets -->
<path d="M290.600 109l1.800-1.800 1.800 1.800M309.800 106.600l1.800 1.800 1.800-1.800" stroke-width=".9"/>
<!-- eraser on clear format -->
<path d="M335.600 110.600l3.800 2.600-3 4.200-3.800-2.600z" fill="#e4d4d0"/>
</g>
<rect x="176" y="115.600" width="14" height="2.600" fill="#b4b2b0"/>
<rect x="208" y="115.600" width="14" height="2.600" fill="#b4b2b0"/>
<!-- ===== paragraph group ===== -->
<g stroke="#aaa8a6" stroke-width="1">
<!-- bullets -->
<path d="M362.600 64.200h9.400M362.600 69.400h9.400M362.600 74.600h9.400"/><path d="M358.400 64.200h2.200M358.400 69.400h2.200M358.400 74.600h2.200" stroke-width="2.200"/>
<path d="M378.400 68.600l2.500 2.500 2.500-2.500M411 68.600l2.500 2.500 2.500-2.500M449 68.600l2.500 2.500 2.500-2.500M500.400 68.600l2.500 2.500 2.500-2.500M500.400 89.400l2.500 2.500 2.500-2.500M500.400 110.400l2.500 2.500 2.500-2.500M469.200 89.400l2.500 2.500 2.500-2.500M434.200 110.400l2.500 2.500 2.500-2.500"/>
<!-- numbering -->
<path d="M395 64.200h9.200M395 69.400h9.200M395 74.600h9.200"/><path d="M391.400 62.600v3.200M391 67.800h1.200v1.500h-1.200v1.600h1.200M391 73h1.200v3.200h-1.200M391 74.600h1.200" stroke-width=".7"/>
<!-- line spacing -->
<path d="M437 64.200h8.400M437 67.600h8.400M437 71h8.400M437 74.400h8.400"/><path d="M432.400 63v12.600M430.600 65l1.800-2 1.800 2M430.600 73.600l1.800 2 1.800-2" stroke-width=".9"/>
<!-- text direction -->
<path d="M486.200 62v14M483.800 73.600l2.400 2.600 2.400-2.600"/><path d="M492.800 71v5.200M491 74.400l1.800 1.900 1.800-1.900" stroke-width=".9"/>
<!-- indent dec/inc -->
<path d="M359.600 84.600h12.200M359.600 96h12.200M365.600 88.400h6.200M365.600 92.200h6.200M359.800 90.300h4M361.400 88.700l-1.700 1.600 1.700 1.600"/>
<path d="M379 84.600h12.200M379 96h12.200M385 88.400h6.200M385 92.200h6.200M379 90.300h4.200M381.600 88.700l1.700 1.600-1.700 1.600"/>
<!-- rtl / ltr marks -->
<path d="M406.600 88.200l2.200 2.200-2.200 2.200M436.400 88.200l-2.200 2.200 2.200 2.200" stroke-width=".9"/>
<!-- columns -->
<path d="M452.800 87h4.400M452.800 90.300h4.400M452.800 93.600h4.400M459 87h4.400M459 90.300h4.400M459 93.600h4.400"/>
<!-- align text -->
<path d="M485 85.600h-2.600v9.600h2.600M493.400 85.600h2.600v9.600h-2.600"/><path d="M485.600 90.400h7.200" stroke-dasharray="1.400 1"/><path d="M489.200 83v5.600M487.400 84.800l1.800-1.800 1.800 1.800M489.200 92.400v5.600M487.400 96.200l1.800 1.800 1.800-1.800" stroke-width=".9"/>
<!-- align L C R J -->
<path d="M359.600 105.600h12.200M359.600 109.200h8M359.600 112.800h12.200M359.600 116.400h8"/>
<path d="M379 105.600h12.200M381 109.200h8.200M379 112.800h12.200M381 116.400h8.200"/>
<path d="M398 105.600h12.200M402.200 109.200h8M398 112.800h12.200M402.200 116.400h8"/>
<path d="M417.200 105.600h12.200M417.200 109.200h12.200M417.200 112.800h12.200M417.200 116.400h12.200"/>
<!-- smartart -->
<path d="M482.800 106.600h8l3 3.200-3 3.200h-8l3-3.200z" fill="#c8c6c4"/><rect x="487.600" y="110.800" width="8.400" height="5.800" fill="#f3f2f1"/><path d="M489.400 113.800h4.800" stroke-width=".8"/>
</g>
<!-- ===== drawing / editing ===== -->
<rect x="530.500" y="60.400" width="27.200" height="26" fill="#fff" stroke="#d6d4d2" stroke-width=".8"/>
<rect x="581.300" y="60.400" width="27.200" height="26" fill="#fff" stroke="#d6d4d2" stroke-width=".8"/>
<rect x="537.500" y="66.600" width="9" height="8.400" fill="#fff" stroke="#555" stroke-width="1.100"/>
<circle cx="596.200" cy="70.800" r="5" stroke="#555" stroke-width="1.100"/><path d="M592.600 74.600l-5.200 5.200" stroke="#555" stroke-width="1.200"/>
<path d="M541.200 110l2.600 2.600 2.600-2.600M591.600 110l2.600 2.600 2.600-2.600M640.800 111.600l2.600 2.600 2.600-2.600" stroke="#444" stroke-width="1.200"/>
<!-- ===== dictate ===== -->
<rect x="637.600" y="63.600" width="11" height="20" rx="2.400" fill="#7cbaf0" stroke="#3a8ad8" stroke-width="1"/>
<path d="M634.800 78v2.400c0 3 2.600 5 5 5h6.400c2.600 0 5-2 5-5v-2.400" stroke="#6a6a6a" stroke-width="1"/><path d="M643.100 85.400v2.400M639.400 87.900h7.600" stroke="#6a6a6a" stroke-width="1"/>
<!-- ===== design ideas ===== -->
<g stroke="#5c5c5c" stroke-width="1.100">
<path d="M690 66.600h15.800v18.400h-23.400v-6"/><path d="M690 68.800h13.600v14h-19v-4.400" stroke="#8a8a8a" stroke-width=".9"/><path d="M689 74.400h14.600M698.600 74.400v8.400" stroke="#8a8a8a" stroke-width=".9"/>
</g>
<path d="M684.800 62h5.600l-2.600 5.400h2.800l-8.200 10.800 2.400-7.400h-3.400z" fill="#f7a128" stroke="#e07c10" stroke-width=".7"/>
<!-- ===== status bar ===== -->
<g stroke="#555" stroke-width="1">
<!-- book -->
<path d="M80.200 521.400v8.400M80.200 521.400c-1.400-1.200-3.400-1.400-5.400-1v8.400c2-.4 4-.2 5.400 1 1.400-1.200 3.400-1.400 5.400-1v-8.400c-2-.4-4-.2-5.400 1z" stroke-width=".9"/>
<!-- accessibility -->
<circle cx="221.400" cy="519.400" r="1.100" stroke-width=".9"/><path d="M218.400 522.400h6M221.400 522.400v3.400M221.400 525.800l-2 3.400M221.400 525.800l1.600 2" stroke-width=".9"/>
<path d="M219.600 517.600a6.200 6.200 0 0 0-1 11.600" stroke-width=".8" stroke-dasharray="1.600 1.200"/><path d="M224.600 526.400l4 4M228.600 526.400l-4 4" stroke-width="1"/>
<!-- notes -->
<path d="M388.400 528.200h12.600M388.400 525.400h12.600M392.200 522.200l2.500-2.400 2.500 2.400" stroke-width=".9"/>
<!-- normal view -->
<rect x="457.800" y="519.600" width="11" height="9.600" stroke="#333" stroke-width="1.100"/><path d="M460.600 519.600v9.600M460.600 522.200h8.200M462.600 524.600h4.400" stroke="#333" stroke-width="1"/>
<!-- sorter -->
<rect x="492.800" y="519.400" width="4.200" height="4.200" stroke-width=".9"/><rect x="499.600" y="519.400" width="4.200" height="4.200" stroke-width=".9"/><rect x="492.800" y="525.800" width="4.200" height="4.200" stroke-width=".9"/><rect x="499.600" y="525.800" width="4.200" height="4.200" stroke-width=".9"/>
<!-- reading -->
<path d="M533.400 520.400v9M533.400 520.400c-1.400-1-3.400-1.200-5.400-.8v9c2-.4 4-.2 5.400.8 1.400-1 3.400-1.200 5.400-.8v-9c-2-.4-4-.2-5.400.8z" stroke-width=".9"/><path d="M529.400 522.400h2.400M529.400 524.600h2.400M535 522.400h2.400M535 524.600h2.400" stroke-width=".7"/>
<!-- slideshow -->
<path d="M562.400 519.400h11M563.400 519.400v6.400h9v-6.400M567.900 525.800v3.600M565.400 529.600h5" stroke-width=".9"/>
<!-- zoom -->
<path d="M590.800 524.600h6.600M693.200 524.600h7M696.700 521.100v7" stroke-width="1"/>
<path d="M602.600 524.600h85" stroke="#8a8886" stroke-width=".9"/><path d="M645.500 522.400v4.400" stroke="#8a8886" stroke-width=".9"/>
<rect x="623.200" y="519" width="4.200" height="11" fill="#555" stroke="none"/>
<!-- fit -->
<rect x="743.400" y="521.200" width="6.800" height="6.800" stroke-width=".9"/><path d="M746.800 518v2.400M745.400 519.400l1.400-1.500 1.400 1.500M746.800 531.200v-2.400M745.400 529.800l1.400 1.500 1.400-1.500M740.200 524.600h2.400M741.600 523.200l-1.500 1.400 1.500 1.400M753.400 524.600h-2.400M752 523.200l1.500 1.400-1.500 1.400" stroke-width=".8"/>
</g>
</svg>

<span class="t" id="t0" style="left:21.00px;top:8.89px;font-size:11.5px;font-weight:400;color:rgba(255,255,255,.85);transform:scaleX(0.8702);">AutoSave</span>
<span class="t" id="t1" style="left:87.00px;top:10.20px;font-size:9.5px;font-weight:700;color:#fff;transform:scaleX(0.8237);">Off</span>
<span class="t" id="t2" style="left:310.70px;top:9.09px;font-size:11.5px;font-weight:400;color:rgba(255,255,255,.9);transform:scaleX(0.8646);">Boxy Robot...</span>
<span class="t" id="t3" style="left:505.40px;top:9.54px;font-size:11px;font-weight:400;color:#fff;transform:scaleX(0.8979);">Farshad Iqbal</span>
<span class="t" id="t4" style="left:15.90px;top:37.89px;font-size:11.5px;font-weight:400;color:#444;transform:scaleX(0.8850);">File</span>
<span class="t" id="t5" style="left:60.50px;top:37.89px;font-size:11.5px;font-weight:700;color:#4a4a4a;transform:scaleX(1.0046);">Home</span>
<span class="t" id="t6" style="left:116.00px;top:37.89px;font-size:11.5px;font-weight:400;color:#444;transform:scaleX(1.0081);">Insert</span>
<span class="t" id="t7" style="left:170.00px;top:37.89px;font-size:11.5px;font-weight:400;color:#444;transform:scaleX(0.9634);">Design</span>
<span class="t" id="t8" style="left:229.90px;top:37.89px;font-size:11.5px;font-weight:400;color:#444;transform:scaleX(0.9583);">Transitions</span>
<span class="t" id="t9" style="left:311.00px;top:37.89px;font-size:11.5px;font-weight:400;color:#444;transform:scaleX(0.9703);">Animations</span>
<span class="t" id="t10" style="left:393.60px;top:37.89px;font-size:11.5px;font-weight:400;color:#444;transform:scaleX(0.9592);">Slide Show</span>
<span class="t" id="t11" style="left:473.70px;top:37.89px;font-size:11.5px;font-weight:400;color:#444;transform:scaleX(0.9306);">Review</span>
<span class="t" id="t12" style="left:533.00px;top:37.89px;font-size:11.5px;font-weight:400;color:#444;transform:scaleX(0.9547);">View</span>
<span class="t" id="t13" style="left:581.80px;top:37.89px;font-size:11.5px;font-weight:400;color:#444;transform:scaleX(0.9923);">Add-ins</span>
<span class="t" id="t14" style="left:645.50px;top:37.89px;font-size:11.5px;font-weight:400;color:#444;transform:scaleX(0.9638);">Help</span>
<span class="t" id="t15" style="left:13.60px;top:128.55px;font-size:10px;font-weight:400;color:#444;transform:scaleX(1.0137);">Clipboard</span>
<span class="t" id="t16" style="left:112.30px;top:128.55px;font-size:10px;font-weight:400;color:#444;transform:scaleX(0.9541);">Slides</span>
<span class="t" id="t17" style="left:240.70px;top:128.55px;font-size:10px;font-weight:400;color:#444;transform:scaleX(0.9992);">Font</span>
<span class="t" id="t18" style="left:403.30px;top:128.55px;font-size:10px;font-weight:400;color:#444;transform:scaleX(0.9849);">Paragraph</span>
<span class="t" id="t19" style="left:631.40px;top:128.55px;font-size:10px;font-weight:400;color:#444;transform:scaleX(0.9359);">Voice</span>
<span class="t" id="t20" style="left:674.50px;top:128.55px;font-size:10px;font-weight:400;color:#444;transform:scaleX(0.9742);">Designer</span>
<span class="t" id="t21" style="left:14.30px;top:93.10px;font-size:10.5px;font-weight:400;color:#444;transform:scaleX(0.9010);">Paste</span>
<span class="t" id="t22" style="left:99.50px;top:93.10px;font-size:10.5px;font-weight:400;color:#444;transform:scaleX(0.9755);">New</span>
<span class="t" id="t23" style="left:94.00px;top:106.90px;font-size:10.5px;font-weight:400;color:#444;transform:scaleX(0.9290);">Slide</span>
<span class="t" id="t24" style="left:525.70px;top:91.30px;font-size:10.5px;font-weight:400;color:#444;transform:scaleX(0.9684);">Drawing</span>
<span class="t" id="t25" style="left:578.40px;top:91.30px;font-size:10.5px;font-weight:400;color:#444;transform:scaleX(0.9841);">Editing</span>
<span class="t" id="t26" style="left:627.20px;top:93.10px;font-size:10.5px;font-weight:400;color:#444;transform:scaleX(0.9728);">Dictate</span>
<span class="t" id="t27" style="left:678.70px;top:93.10px;font-size:10.5px;font-weight:400;color:#444;transform:scaleX(0.9270);">Design</span>
<span class="t" id="t28" style="left:682.00px;top:106.90px;font-size:10.5px;font-weight:400;color:#444;transform:scaleX(0.8876);">Ideas</span>
<span class="t" id="t29" style="left:304.80px;top:64.00px;font-size:10.5px;font-weight:400;color:#a6a6a6;transform:scaleX(0.8727);">24</span>
<span class="t" id="t30" style="left:179.70px;top:83.04px;font-size:12px;font-weight:700;color:#a0a0a0;transform:scaleX(0.7611);">B</span>
<span class="t" id="t31" style="left:199.80px;top:82.59px;font-size:12.5px;font-weight:400;color:#a0a0a0;transform:scaleX(1.2464);font-style:italic;font-family:'Liberation Serif',serif;">I</span>
<span class="t" id="t32" style="left:217.20px;top:82.94px;font-size:12px;font-weight:400;color:#a0a0a0;transform:scaleX(0.8533);text-decoration:underline;">U</span>
<span class="t" id="t33" style="left:236.60px;top:82.28px;font-size:13.5px;font-weight:400;color:#a0a0a0;transform:scaleX(0.7210);text-shadow:0.6px 0.6px 0 #c8c8c8;">S</span>
<span class="t" id="t34" style="left:252.80px;top:84.80px;font-size:10.5px;font-weight:400;color:#a0a0a0;transform:scaleX(1.0439);text-decoration:line-through;">ab</span>
<span class="t" id="t35" style="left:272.20px;top:81.80px;font-size:10.5px;font-weight:400;color:#a0a0a0;transform:scaleX(0.9974);">AV</span>
<span class="t" id="t36" style="left:210.80px;top:102.09px;font-size:12.5px;font-weight:400;color:#a0a0a0;transform:scaleX(1.0547);">A</span>
<span class="t" id="t37" style="left:240.50px;top:105.34px;font-size:11px;font-weight:400;color:#a0a0a0;transform:scaleX(1.0617);">Aa</span>
<span class="t" id="t38" style="left:280.00px;top:102.68px;font-size:14.5px;font-weight:400;color:#a0a0a0;transform:scaleX(1.0546);">A</span>
<span class="t" id="t39" style="left:300.80px;top:104.94px;font-size:12px;font-weight:400;color:#a0a0a0;transform:scaleX(0.9481);">A</span>
<span class="t" id="t40" style="left:325.60px;top:102.68px;font-size:14.5px;font-weight:400;color:#a0a0a0;transform:scaleX(0.8478);">A</span>
<span class="t" id="t41" style="left:411.00px;top:84.40px;font-size:10.5px;font-weight:700;color:#a0a0a0;transform:scaleX(1.0267);">¶</span>
<span class="t" id="t42" style="left:425.80px;top:84.40px;font-size:10.5px;font-weight:700;color:#a0a0a0;transform:scaleX(0.9925);">¶</span>
<span class="t" id="t43" style="left:490.00px;top:61.20px;font-size:9.5px;font-weight:400;color:#a0a0a0;transform:scaleX(0.8512);">A</span>
<span class="t" id="t44" style="left:542.80px;top:68.89px;font-size:12.5px;font-weight:700;color:#3aa0e8;transform:scaleX(0.9412);">A</span>
<span class="t" id="t45" style="left:12.40px;top:155.14px;font-size:12px;font-weight:400;color:#c5512f;transform:scaleX(0.7327);">1</span>
<span class="t" id="t46" style="left:7.00px;top:519.55px;font-size:10px;font-weight:400;color:#444;transform:scaleX(0.9791);">Slide 1 of 1</span>
<span class="t" id="t47" style="left:101.00px;top:519.55px;font-size:10px;font-weight:400;color:#444;transform:scaleX(0.9875);">English (United States)</span>
<span class="t" id="t48" style="left:232.50px;top:519.55px;font-size:10px;font-weight:400;color:#444;transform:scaleX(0.9872);">Accessibility: Investigate</span>
<span class="t" id="t49" style="left:403.50px;top:519.55px;font-size:10px;font-weight:400;color:#444;transform:scaleX(0.9761);">Notes</span>
<span class="t" id="t50" style="left:711.50px;top:519.55px;font-size:10px;font-weight:400;color:#444;transform:scaleX(0.8743);">55%</span>
<div class="abs" id="bl"></div>
<div class="abs" id="br"></div>
<div class="abs" id="bb"></div>

</body></html>
